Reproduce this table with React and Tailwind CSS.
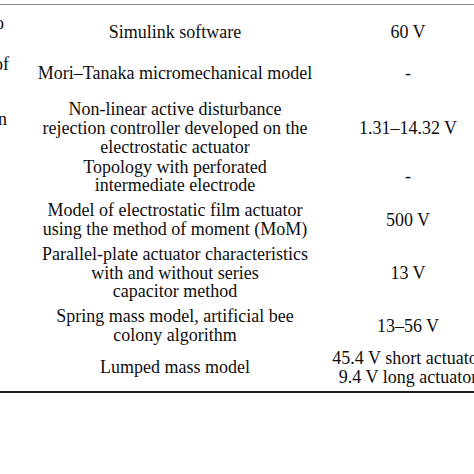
import React from "react";

const rows = [
  {
    pad: "pt-[9px] pb-0",
    c1: [
      { t: "Electrostatic actuator for micro", pr: "pr-[18px]" },
      { t: "manipulation systems", pr: "pr-[60px]" },
    ],
    c2: ["Simulink software"],
    c3: ["60 V"],
  },
  {
    pad: "pt-[3px] pb-[1px]",
    c1: [
      { t: "Effective elastic properties of", pr: "pr-[13px]" },
      { t: "dielectric elastomer", pr: "pr-[60px]" },
    ],
    c2: ["Mori–Tanaka micromechanical model"],
    c3: ["-"],
  },
  {
    pad: "pt-[7px] pb-0",
    c1: [
      { t: "Position tracking control of an", pr: "pr-[15px]" },
      { t: "electrostatic actuator", pr: "pr-[60px]" },
    ],
    c2: [
      "Non-linear active disturbance",
      "rejection controller developed on the",
      "electrostatic actuator",
    ],
    c3: ["1.31–14.32 V"],
  },
  {
    pad: "pt-[1px] pb-[3px]",
    c1: [],
    c2: ["Topology with perforated", "intermediate electrode"],
    c3: ["-"],
  },
  {
    pad: "py-[3px]",
    c1: [],
    c2: ["Model of electrostatic film actuator", "using the method of moment (MoM)"],
    c3: ["500 V"],
  },
  {
    pad: "py-[3px]",
    c1: [],
    c2: [
      "Parallel-plate actuator characteristics",
      "with and without series",
      "capacitor method",
    ],
    c3: ["13 V"],
  },
  {
    pad: "py-[3px]",
    c1: [],
    c2: ["Spring mass model, artificial bee", "colony algorithm"],
    c3: ["13–56 V"],
  },
  {
    pad: "pt-[1px] pb-[5px]",
    c1: [],
    c2: ["Lumped mass model"],
    c3: ["45.4 V short actuator", "9.4 V long actuator"],
  },
];

export default function App() {
  return (
    <div
      className="w-[474px] h-[474px] overflow-hidden bg-white text-[#0e0e0e] pt-[4px]"
      style={{ fontFamily: '"Liberation Serif", "Times New Roman", serif' }}
    >
      <div className="ml-[-178px] w-[666px] border-t border-b-2 border-t-[#8c8c8c] border-b-[#1c1c1c] text-[18px] leading-[18.8px]">
        {rows.map((r, i) => (
          <div key={i} className={`grid grid-cols-[200px_306px_160px] ${r.pad}`}>
            <div className="flex flex-col items-end justify-center">
              {r.c1.map((l, j) => (
                <span key={j} className={`whitespace-nowrap ${l.pr}`}>
                  {l.t}
                </span>
              ))}
            </div>
            <div className="flex flex-col items-center justify-center text-center">
              {r.c2.map((l, j) => (
                <span key={j} className="whitespace-nowrap">
                  {l}
                </span>
              ))}
            </div>
            <div className="flex flex-col items-center justify-center text-center">
              {r.c3.map((l, j) => (
                <span key={j} className="whitespace-nowrap">
                  {l}
                </span>
              ))}
            </div>
          </div>
        ))}
      </div>
    </div>
  );
}
